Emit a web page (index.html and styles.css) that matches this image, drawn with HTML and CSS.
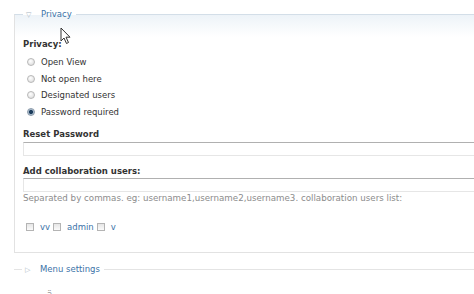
FILE: index.html
```html
<!DOCTYPE html>
<html lang="en">
<head>
  <meta charset="UTF-8" />
  <title>Privacy settings</title>
  <link rel="stylesheet" href="styles.css">
</head>
<body>
  <div class="page">
    <fieldset class="box">
      <legend><span class="tri">&#9661;</span><a href="#">Privacy</a></legend>

      <div class="field">
        <div class="title first">Privacy:</div>
        <label class="option"><input type="radio" name="privacy"> Open View</label>
        <label class="option"><input type="radio" name="privacy"> Not open here</label>
        <label class="option"><input type="radio" name="privacy"> Designated users</label>
        <label class="option"><input type="radio" name="privacy" checked> Password required</label>
      </div>

      <div class="field">
        <div class="title">Reset Password</div>
        <input class="text" type="text">
      </div>

      <div class="field">
        <div class="title">Add collaboration users:</div>
        <input class="text" type="text">
        <div class="desc">Separated by commas. eg: username1,username2,username3. collaboration users list:</div>
      </div>

      <div class="users">
        <input type="checkbox"><a href="#">vv</a><input type="checkbox"><a href="#">admin</a><input type="checkbox"><a href="#">v</a>
      </div>
    </fieldset>

    <fieldset class="box collapsed">
      <legend><span class="tri">&#9655;</span><a href="#">Menu settings</a></legend>
    </fieldset>

    <div class="stub">&auml;</div>
  </div>

  <svg class="cursor" width="12" height="18" viewBox="0 0 12 18">
    <path d="M1 1 L1 14 L4 11 L6.5 16.5 L8.5 15.5 L6 10.2 L10 10.2 Z" fill="#fff" stroke="#333" stroke-width="1" stroke-linejoin="round"/>
  </svg>
</body>
</html>
```

FILE: styles.css
```css
* {
  box-sizing: border-box;
}

body {
  margin: 0;
  overflow: hidden;
  height: 294px;
  background: #fff;
  font-family: 'DejaVu Sans', Verdana, sans-serif;
  font-size: 8.5px;
  color: #333;
}

a {
  color: #3b73a8;
  text-decoration: none;
}

.page {
  padding: 8px 0 0 14px;
  width: 540px;
}

.box {
  margin: 0;
  padding: 0 0 19px 8px;
  border: 1px solid #e2e2e2;
  border-top-color: #d3dee8;
  background: linear-gradient(#edf3f8, #fff 22px);
}

.box legend {
  padding: 0 4px 0 3px;
  line-height: 12px;
}

.tri {
  display: inline-block;
  width: 15px;
  color: #a9b6c2;
  font-size: 7px;
}

.title {
  font-weight: bold;
  line-height: 11px;
  margin: 9px 0 2px;
}

.title.first {
  margin: 17.5px 0 4px;
}

.option {
  display: flex;
  align-items: center;
  gap: 6px;
  height: 16.7px;
  padding-left: 4px;
}

.option input {
  appearance: none;
  margin: 0;
  width: 8px;
  height: 8px;
  border-radius: 50%;
  border: 1px solid #b8b8b8;
  background: radial-gradient(circle at 40% 35%, #fff, #d6d6d6);
}

.option input:checked {
  background: radial-gradient(circle, #1c3d5c 0 1.8px, #9fb3c6 2.3px, #dde4ea);
  border-color: #8a9aaa;
}

.text {
  display: block;
  width: 100%;
  height: 14px;
  margin: 0;
  border: 1px solid #e6e6e6;
  border-top-color: #b0b0b0;
  background: #fff;
}

.field:nth-child(4) .title {
  margin: 9.5px 0 1px;
}

.desc {
  margin-top: 1.5px;
  color: #8c8c8c;
  font-size: 8.7px;
  line-height: 11px;
}

.users {
  display: flex;
  align-items: center;
  margin-top: 16.5px;
  padding-left: 3px;
  line-height: 12px;
}

.users input {
  appearance: none;
  margin: 0 6px 0 0;
  width: 8px;
  height: 8px;
  border: 1px solid #b4b4b4;
  background: linear-gradient(#e6e6e6, #fbfbfb);
}

.users a {
  margin-right: 3px;
}

.collapsed {
  margin-top: 10px;
  padding: 0 0 0 8px;
  height: 7px;
  border-width: 1px 0 0 0;
  border-color: #e4e4e4;
  background: none;
}

.stub {
  padding-left: 33px;
  margin-top: 13px;
  color: #999;
}

.cursor {
  position: absolute;
  left: 60px;
  top: 27px;
}
```
